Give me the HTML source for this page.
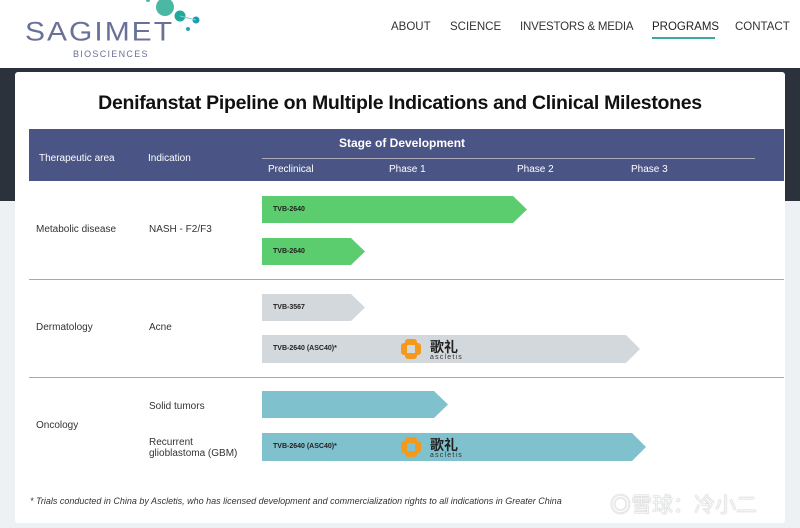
<!DOCTYPE html>
<html><head><meta charset="utf-8"><style>
*{margin:0;padding:0;box-sizing:border-box}
body{width:800px;height:528px;overflow:hidden;background:#eef1f4;font-family:"Liberation Sans","Noto Sans CJK SC",sans-serif;position:relative}
.hdr{position:absolute;left:0;top:0;width:800px;height:68px;background:#fff}
.band{position:absolute;left:0;top:68px;width:800px;height:133px;background:#2b323c}
.card{position:absolute;left:15px;top:72px;width:770px;height:451px;background:#fff;border-radius:3px}
.nav{position:absolute;top:21px;font-size:11.5px;color:#333;white-space:nowrap}
.abs{position:absolute;white-space:nowrap}
.th{position:absolute;left:29px;top:129px;width:755px;height:52px;background:#4a5585;color:#fff}
.t{position:absolute;font-size:10px;color:#333;white-space:nowrap}
.bar{position:absolute;height:27px;width:300px}
.bar span{position:absolute;left:11px;top:10px;font-size:7px;font-weight:bold;color:#222;white-space:nowrap}
.sep{position:absolute;left:29px;width:755px;height:1px;background:#aaa}
.logo{position:absolute;font-size:15px;font-weight:bold;color:#222}
</style></head><body>
<div class="hdr"></div>
<div class="band"></div>
<div class="abs" style="left:25px;top:17px;font-size:30px;color:#6a7198;letter-spacing:2px;transform:scaleY(0.9);transform-origin:0 0">SAGIMET</div>
<div class="abs" style="left:73px;top:49px;font-size:9px;color:#6a7198;letter-spacing:1.3px">BIOSCIENCES</div>
<svg class="abs" style="left:138px;top:0" width="70" height="35">
<circle cx="27" cy="7" r="9" fill="#4bb8a5"/><circle cx="42" cy="16" r="5.5" fill="#1fa99b"/><circle cx="58" cy="20" r="3.5" fill="#1d9bb4"/><circle cx="50" cy="29" r="2" fill="#2ba3b8"/><circle cx="10" cy="0" r="2" fill="#4bb8a5"/>
<line x1="42" y1="16" x2="58" y2="20" stroke="#8cc" stroke-width="1"/></svg>
<div class="nav" style="left:391px">ABOUT</div>
<div class="nav" style="left:450px">SCIENCE</div>
<div class="nav" style="left:520px;letter-spacing:-0.2px">INVESTORS &amp; MEDIA</div>
<div class="nav" style="left:652px;color:#222">PROGRAMS</div>
<div class="abs" style="left:652px;top:37px;width:63px;height:2px;background:#3aa99f"></div>
<div class="nav" style="left:735px">CONTACT</div>
<div class="card"></div>
<div class="abs" style="left:0;top:92px;width:800px;text-align:center;font-size:19.5px;font-weight:bold;color:#111;letter-spacing:-0.3px">Denifanstat Pipeline on Multiple Indications and Clinical Milestones</div>
<div class="th">
<div class="abs" style="left:10px;top:24px;font-size:10px">Therapeutic area</div>
<div class="abs" style="left:119px;top:24px;font-size:10px">Indication</div>
<div class="abs" style="left:310px;top:7px;font-size:12px;font-weight:bold">Stage of Development</div>
<div class="abs" style="left:233px;top:29px;width:493px;height:1px;background:#aab"></div>
<div class="abs" style="left:239px;top:35px;font-size:10px">Preclinical</div>
<div class="abs" style="left:360px;top:35px;font-size:10px">Phase 1</div>
<div class="abs" style="left:488px;top:35px;font-size:10px">Phase 2</div>
<div class="abs" style="left:602px;top:35px;font-size:10px">Phase 3</div>
</div>
<div class="t" style="left:36px;top:224px">Metabolic disease</div>
<div class="t" style="left:149px;top:224px">NASH - F2/F3</div>
<svg class="abs" style="left:0;top:0" width="800" height="528">
<polygon points="262,196 513,196 527,209.5 513,223 262,223" fill="#5ccd6e"/>
<polygon points="262,238 351,238 365,251.5 351,265 262,265" fill="#5ccd6e"/>
<polygon points="262,294 351,294 365,307.5 351,321 262,321" fill="#d3d8dc"/>
<polygon points="262,335 626,335 640,349 626,363 262,363" fill="#d3d8dc"/>
<polygon points="262,391 434,391 448,404.5 434,418 262,418" fill="#7fc1cd"/>
<polygon points="262,433 632,433 646,447 632,461 262,461" fill="#7fc1cd"/>
<g fill="#f39a1e"><rect x="405" y="339" width="12" height="20" rx="3"/><rect x="401" y="343" width="20" height="12" rx="3"/><rect x="407" y="345" width="8" height="8" fill="#d3d8dc"/></g>
<g fill="#f39a1e"><rect x="405" y="437" width="12" height="20" rx="3"/><rect x="401" y="441" width="20" height="12" rx="3"/><rect x="407" y="443" width="8" height="8" fill="#7fc1cd"/></g>
</svg>
<div class="bar" style="left:262px;top:196px"><span>TVB-2640</span></div>
<div class="bar" style="left:262px;top:238px"><span>TVB-2640</span></div>
<div class="sep" style="top:279px"></div>
<div class="t" style="left:36px;top:322px">Dermatology</div>
<div class="t" style="left:149px;top:322px">Acne</div>
<div class="bar" style="left:262px;top:294px"><span>TVB-3567</span></div>
<div class="bar" style="left:262px;top:335px"><span>TVB-2640 (ASC40)*</span></div>
<div class="logo" style="left:430px;top:337px;font-size:14px">歌礼</div>
<div class="abs" style="left:430px;top:354px;font-size:7px;color:#333;letter-spacing:1.2px">ascletis</div>
<div class="sep" style="top:377px"></div>
<div class="t" style="left:36px;top:420px">Oncology</div>
<div class="t" style="left:149px;top:401px">Solid tumors</div>
<div class="t" style="left:149px;top:437px;line-height:11px">Recurrent<br>glioblastoma (GBM)</div>
<div class="bar" style="left:262px;top:433px"><span>TVB-2640 (ASC40)*</span></div>
<div class="logo" style="left:430px;top:435px;font-size:14px">歌礼</div>
<div class="abs" style="left:430px;top:452px;font-size:7px;color:#333;letter-spacing:1.2px">ascletis</div>
<div class="abs" style="left:30px;top:496px;font-size:9px;font-style:italic;color:#333">* Trials conducted in China by Ascletis, who has licensed development and commercialization rights to all indications in Greater China</div>
<div class="abs" style="left:610px;top:489px;font-size:21px;color:#f4f5f6;text-shadow:0 0 1px #888">◎雪球：冷小二</div>
</body></html>
